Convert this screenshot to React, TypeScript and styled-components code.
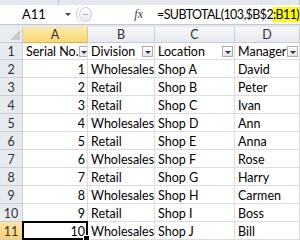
import React from 'react';
import styled, { createGlobalStyle, css } from 'styled-components';

const GlobalStyle = createGlobalStyle`
  html, body {
    margin: 0;
    padding: 0;
    background: #fff;
  }
  body {
    font-family: Lato, 'Open Sans', sans-serif;
    color: #000;
  }
`;

const COLS = '23px 65px 67px 80px 65px';

const Window = styled.div`
  width: 300px;
  height: 240px;
  overflow: hidden;
  display: flex;
  flex-direction: column;
  background: #fff;
`;

const TopStrip = styled.div`
  height: 5px;
  background: #e4e8ee;
  display: flex;
`;

const StripPane = styled.div<{ $w?: number }>`
  width: ${p => (p.$w ? `${p.$w}px` : 'auto')};
  flex: ${p => (p.$w ? '0 0 auto' : '1')};
  border-right: 1px solid #b9c1cc;
`;

const FormulaBar = styled.div`
  height: 20px;
  display: flex;
  align-items: stretch;
  background: #fff;
  border-bottom: 1px solid #c5cbd3;
`;

const NameBox = styled.div`
  flex: 0 0 76px;
  display: flex;
  align-items: center;
  justify-content: space-between;
  padding: 0 5px 0 22px;
  box-sizing: border-box;
  font-size: 13px;
`;

const Caret = styled.span`
  width: 0;
  height: 0;
  border-left: 3px solid transparent;
  border-right: 3px solid transparent;
  border-top: 3px solid #444;
`;

const Pill = styled.div`
  flex: 0 0 72px;
  display: flex;
  align-items: center;
  justify-content: space-between;
  padding: 0 5px 0 2px;
  box-sizing: border-box;
  border-left: 1px solid #c8ccd2;
  border-radius: 10px 0 0 10px;
`;

const Grip = styled.span`
  width: 11px;
  height: 13px;
  border-radius: 50%;
  border: 1px solid #d0d4da;
  background: linear-gradient(#fafafa, #e8eaee);
  display: flex;
  align-items: center;
  justify-content: center;
  &::after {
    content: '';
    width: 5px;
    height: 1px;
    background: #b0b4ba;
  }
`;

const Fx = styled.span`
  font-family: 'Liberation Serif', serif;
  font-style: italic;
  font-size: 12px;
  color: #444;
`;

const Formula = styled.div`
  flex: 1;
  min-width: 0;
  overflow: hidden;
  display: flex;
  align-items: center;
  padding-left: 9px;
  font-size: 12.5px;
  letter-spacing: -0.6px;
  white-space: nowrap;
`;

const Mark = styled.span`
  background: #ffff00;
  padding-right: 1px;
`;

const Gap = styled.div`
  height: 2px;
  background: #e4e8ee;
`;

const Sheet = styled.div`
  display: grid;
  grid-template-columns: ${COLS};
  grid-auto-rows: 18px;
  grid-template-rows: 16px 17px;
`;

const headerBase = css`
  display: flex;
  align-items: center;
  justify-content: center;
  font-size: 12.5px;
  color: #333;
  box-sizing: border-box;
  border-right: 1px solid #c9ced6;
  border-bottom: 1px solid #c9ced6;
`;

const Corner = styled.div`
  ${headerBase};
  background: #e9ecf0;
  position: relative;
  &::after {
    content: '';
    position: absolute;
    right: 2px;
    bottom: 2px;
    border-left: 10px solid transparent;
    border-bottom: 10px solid #c6cad0;
  }
`;

const ColHead = styled.div<{ $active?: boolean }>`
  ${headerBase};
  background: ${p => (p.$active ? 'linear-gradient(#fdeaa6, #f9d77a)' : 'linear-gradient(#f6f7f9, #e6e9ee)')};
  ${p => p.$active && 'border-bottom: 1px solid #f2a93b; border-right: 1px solid #f2c46b;'}
`;

const RowHead = styled.div<{ $active?: boolean }>`
  ${headerBase};
  background: ${p => (p.$active ? 'linear-gradient(#fde4a0, #f8d272)' : '#e7eaef')};
  ${p => p.$active && 'border-right: 1px solid #f2a93b;'}
  padding-top: 1px;
`;

const Cell = styled.div<{ $num?: boolean; $selected?: boolean }>`
  position: relative;
  display: flex;
  align-items: center;
  justify-content: ${p => (p.$num ? 'flex-end' : 'flex-start')};
  padding: 1px 2px 0 3px;
  box-sizing: border-box;
  font-size: 12.5px;
  white-space: nowrap;
  border-right: 1px solid #dadcdd;
  border-bottom: 1px solid #dadcdd;
  ${p =>
    p.$selected &&
    css`
      &::after {
        content: '';
        position: absolute;
        left: -1px;
        top: -1px;
        right: -1px;
        bottom: -1px;
        border: 2px solid #000;
      }
      &::before {
        content: '';
        position: absolute;
        right: -3px;
        bottom: -3px;
        width: 5px;
        height: 5px;
        background: #000;
        border: 1px solid #fff;
        z-index: 2;
      }
    `}
`;

const HeadCell = styled(Cell)`
  justify-content: space-between;
  padding-right: 1px;
  overflow: hidden;
`;

const FilterBtn = styled.span`
  flex: 0 0 auto;
  width: 11px;
  height: 11px;
  box-sizing: border-box;
  border: 1px solid #a9adb3;
  background: linear-gradient(#ffffff, #e3e6ea);
  display: flex;
  align-items: center;
  justify-content: center;
  &::after {
    content: '';
    border-left: 3px solid transparent;
    border-right: 3px solid transparent;
    border-top: 3px solid #333;
    margin-top: 1px;
  }
`;

const rows: [number, string, string, string][] = [
  [1, 'Wholesales', 'Shop A', 'David'],
  [2, 'Retail', 'Shop B', 'Peter'],
  [3, 'Retail', 'Shop C', 'Ivan'],
  [4, 'Wholesales', 'Shop D', 'Ann'],
  [5, 'Retail', 'Shop E', 'Anna'],
  [6, 'Wholesales', 'Shop F', 'Rose'],
  [7, 'Retail', 'Shop G', 'Harry'],
  [8, 'Wholesales', 'Shop H', 'Carmen'],
  [9, 'Retail', 'Shop I', 'Boss'],
  [10, 'Wholesales', 'Shop J', 'Bill'],
];

const headers = ['Serial No.', 'Division', 'Location', 'Manager'];

const App: React.FC = () => (
  <>
    <GlobalStyle />
    <Window>
      <TopStrip>
        <StripPane $w={58} />
        <StripPane />
      </TopStrip>
      <FormulaBar>
        <NameBox>
          <span>A11</span>
          <Caret />
        </NameBox>
        <Pill>
          <Grip />
          <Fx>fx</Fx>
        </Pill>
        <Formula>
          =SUBTOTAL(103,$B$2<Mark>:B11)</Mark>
        </Formula>
      </FormulaBar>
      <Gap />
      <Sheet>
        <Corner />
        {['A', 'B', 'C', 'D'].map(c => (
          <ColHead key={c} $active={c === 'A'}>
            {c}
          </ColHead>
        ))}

        <RowHead>1</RowHead>
        {headers.map(h => (
          <HeadCell key={h}>
            <span>{h}</span>
            <FilterBtn />
          </HeadCell>
        ))}

        {rows.map(([n, div, loc, mgr], i) => (
          <React.Fragment key={n}>
            <RowHead $active={i === 9}>{i + 2}</RowHead>
            <Cell $num $selected={i === 9}>
              {n}
            </Cell>
            <Cell>{div}</Cell>
            <Cell>{loc}</Cell>
            <Cell>{mgr}</Cell>
          </React.Fragment>
        ))}
      </Sheet>
    </Window>
  </>
);

export default App;
